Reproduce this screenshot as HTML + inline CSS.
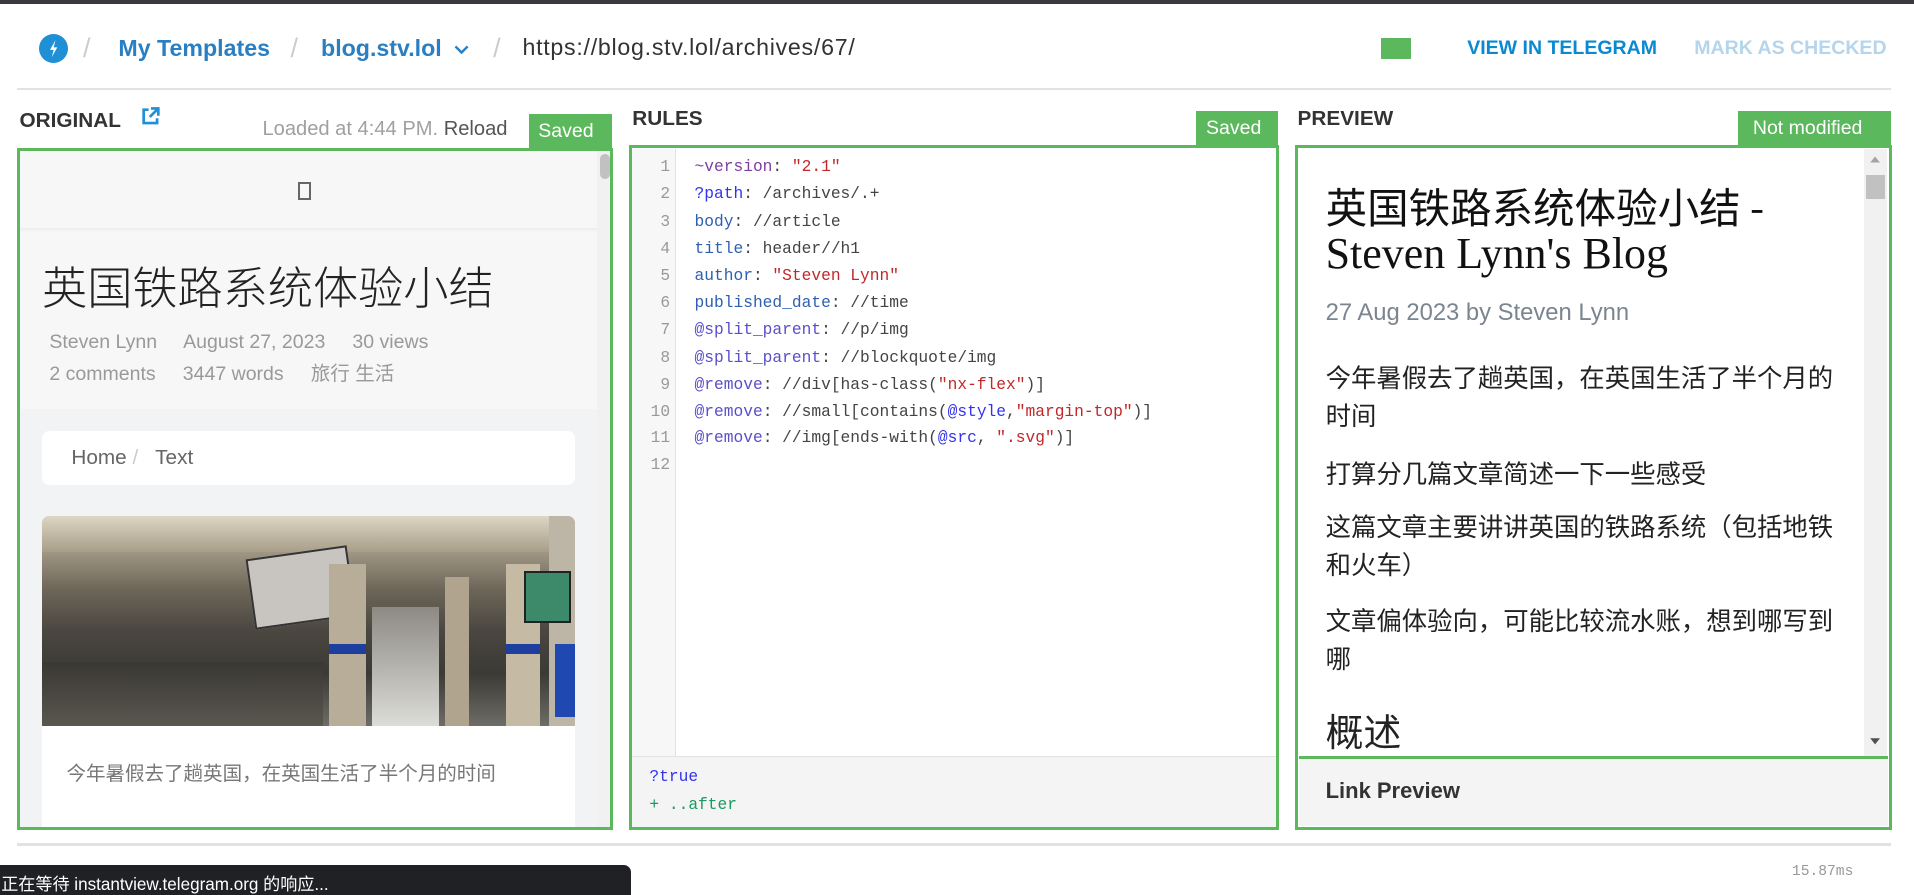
<!DOCTYPE html>
<html><head><meta charset="utf-8">
<style>
html,body{margin:0;padding:0;}
body{width:1568px;height:731px;overflow:hidden;background:#fff;position:relative;zoom:1.22066;font-family:"Liberation Sans","Noto Sans CJK SC",sans-serif;}
.abs{position:absolute;}
.panel{position:absolute;border:3px solid #5cb85c;box-sizing:border-box;overflow:hidden;background:#fff;}
.badge{position:absolute;background:#5cb85c;color:#fff;font-size:16px;height:28px;line-height:28px;padding:0 8px;box-sizing:border-box;}
.lbl{position:absolute;font-size:17px;font-weight:bold;color:#333;}
.code{position:absolute;left:569px;font-family:"Liberation Mono",monospace;font-size:13.3px;color:#444;white-space:pre;}
.ln{position:absolute;left:518px;width:31px;text-align:right;font-family:"Liberation Mono",monospace;font-size:13.3px;color:#999;}
.k{color:#2e5fb0}.p{color:#7b3fa0}.q{color:#3333ee}.a{color:#5a4fc8}.s{color:#c0282a}
.pv{position:absolute;left:1086px;font-size:20.8px;color:#222;white-space:nowrap;}
</style></head><body>
<div class="abs" style="left:0;top:0;width:1568px;height:3px;background:#3a3a3e"></div>

<div class="abs" style="left:32px;top:28px;width:24px;height:24px;border-radius:50%;background:#1f8fd6"></div>
<svg class="abs" style="left:32px;top:28px" width="24" height="24" viewBox="0 0 24 24"><path d="M13.5 5 L9 13 L12 13 L10.5 19 L15 11 L12 11 Z" fill="#fff"/></svg>
<div class="abs" style="left:68px;top:27px;font-size:22px;color:#ccc">/</div>
<div class="abs" style="left:97px;top:29px;font-size:19px;color:#2a7fc2;font-weight:bold">My Templates</div>
<div class="abs" style="left:238px;top:27px;font-size:22px;color:#ccc">/</div>
<div class="abs" style="left:263px;top:29px;font-size:19px;color:#2a7fc2;font-weight:bold">blog.stv.lol</div>
<svg class="abs" style="left:371px;top:36px" width="14" height="10" viewBox="0 0 14 10"><path d="M2 2 L7 7 L12 2" stroke="#2a7fc2" stroke-width="2" fill="none"/></svg>
<div class="abs" style="left:404px;top:27px;font-size:22px;color:#ccc">/</div>
<div class="abs" style="left:428px;top:28px;font-size:19px;color:#333;letter-spacing:0.6px">https://blog.stv.lol/archives/67/</div>
<div class="abs" style="left:1131px;top:31px;width:25px;height:17px;background:#5cb85c"></div>
<div class="abs" style="left:1202px;top:30px;font-size:16px;font-weight:bold;color:#0a88d0">VIEW IN TELEGRAM</div>
<div class="abs" style="left:1388px;top:30px;font-size:16px;font-weight:bold;color:#b4d5ec">MARK AS CHECKED</div>
<div class="abs" style="left:14px;top:72px;width:1535px;height:2px;background:#e2e2e2"></div>

<div class="lbl" style="left:16px;top:89px">ORIGINAL</div>
<svg class="abs" style="left:115px;top:87px" width="17" height="17" viewBox="0 0 17 17"><path d="M7 3 H3 V14 H14 V10" stroke="#1f8fd6" stroke-width="2.2" fill="none"/><path d="M9 2 H15 V8 M15 2 L8 9" stroke="#1f8fd6" stroke-width="2.2" fill="none"/></svg>
<div class="abs" style="left:215px;top:97px;font-size:16.5px;color:#a0a0a0">Loaded at 4:44 PM. <span style="color:#555">Reload</span></div>
<div class="badge" style="left:433px;top:93px;width:68px">Saved</div>
<div class="lbl" style="left:518px;top:88px">RULES</div>
<div class="badge" style="left:980px;top:91px;width:67px">Saved</div>
<div class="lbl" style="left:1063px;top:88px">PREVIEW</div>
<div class="badge" style="left:1424px;top:91px;width:125px;padding-left:12px">Not modified</div>

<div class="panel" style="left:14px;top:121px;width:488px;height:559px;background:#f2f3f5">
  <div class="abs" style="left:0;top:0;width:473px;height:63px;background:#f7f7f7"></div>
  <div class="abs" style="left:228px;top:26px;width:10px;height:14px;border:2px solid #666;box-sizing:border-box"></div>
  <div class="abs" style="left:0;top:63px;width:473px;height:4px;background:linear-gradient(#ececec,#f7f7f7)"></div>
  <div class="abs" style="left:0;top:67px;width:473px;height:145px;background:#f7f7f7"></div>
  <div class="abs" style="left:18px;top:87px;font-size:37px;color:#222;font-weight:300;font-family:'Noto Sans CJK SC',sans-serif;line-height:48px">英国铁路系统体验小结</div>
  <div class="abs" style="left:24px;top:148px;font-size:16px;color:#999;white-space:pre">Steven Lynn     August 27, 2023     30 views</div>
  <div class="abs" style="left:24px;top:169px;font-size:16px;color:#999;white-space:pre">2 comments     3447 words     旅行 生活</div>
  <div class="abs" style="left:18px;top:230px;width:437px;height:44px;background:#fff;border-radius:6px"></div>
  <div class="abs" style="left:42px;top:242px;font-size:17px;color:#666">Home <span style="color:#ccc">/</span>&nbsp;&nbsp; Text</div>
  <div class="abs" style="left:18px;top:299px;width:437px;height:172px;border-radius:6px 6px 0 0;overflow:hidden;background:linear-gradient(180deg,#cfc6b2 0%,#9d9482 18%,#6d6658 35%,#4a4640 55%,#3b3a36 75%,#6e6c66 100%)">
    <div class="abs" style="left:0;top:0;width:437px;height:30px;background:linear-gradient(180deg,#ddd6c4,#a89e88)"></div>
    <div class="abs" style="left:170px;top:30px;width:80px;height:55px;background:#c8c4c0;transform:rotate(-8deg);border:2px solid #333"></div>
    <div class="abs" style="left:235px;top:40px;width:30px;height:132px;background:#b8ad98"></div>
    <div class="abs" style="left:235px;top:105px;width:30px;height:8px;background:#1f3fa0"></div>
    <div class="abs" style="left:270px;top:75px;width:55px;height:97px;background:linear-gradient(180deg,#8d8a84,#dcdcd8)"></div>
    <div class="abs" style="left:330px;top:50px;width:20px;height:122px;background:#b0a48e"></div>
    <div class="abs" style="left:380px;top:40px;width:28px;height:132px;background:#c5baa4"></div>
    <div class="abs" style="left:380px;top:105px;width:28px;height:8px;background:#1f3fa0"></div>
    <div class="abs" style="left:415px;top:0;width:22px;height:172px;background:#bdb5a5"></div>
    <div class="abs" style="left:420px;top:105px;width:17px;height:60px;background:#1f48b0"></div>
    <div class="abs" style="left:395px;top:45px;width:35px;height:40px;background:#3c8a6a;border:2px solid #222"></div>
    <div class="abs" style="left:0;top:120px;width:230px;height:52px;background:linear-gradient(180deg,#3a3833,#5a5650)"></div>
  </div>
  <div class="abs" style="left:18px;top:471px;width:437px;height:90px;background:#fff"></div>
  <div class="abs" style="left:38px;top:497px;font-size:16px;color:#777">今年暑假去了趟英国，在英国生活了半个月的时间</div>
  <div class="abs" style="left:473px;top:0;width:12px;height:559px;background:#f1f1f1"></div>
  <div class="abs" style="left:475px;top:3px;width:8px;height:20px;background:#c1c1c1;border-radius:4px"></div>
</div>

<div class="panel" style="left:515px;top:119px;width:533px;height:561px"></div>
<div class="abs" style="left:518px;top:122px;width:35px;height:497px;background:#f7f7f7;border-right:1px solid #e2e2e2"></div>
<div class="ln" style="top:129px">1</div><div class="ln" style="top:151px">2</div><div class="ln" style="top:174px">3</div><div class="ln" style="top:196px">4</div><div class="ln" style="top:218px">5</div><div class="ln" style="top:240px">6</div><div class="ln" style="top:262px">7</div><div class="ln" style="top:285px">8</div><div class="ln" style="top:307px">9</div><div class="ln" style="top:329px">10</div><div class="ln" style="top:351px">11</div><div class="ln" style="top:373px">12</div>
<div class="code" style="top:129px"><span class="p">~version</span>: <span class="s">"2.1"</span></div>
<div class="code" style="top:151px"><span class="q">?path</span>: /archives/.+</div>
<div class="code" style="top:174px"><span class="k">body</span>: //article</div>
<div class="code" style="top:196px"><span class="k">title</span>: header//h1</div>
<div class="code" style="top:218px"><span class="k">author</span>: <span class="s">"Steven Lynn"</span></div>
<div class="code" style="top:240px"><span class="k">published_date</span>: //time</div>
<div class="code" style="top:262px"><span class="a">@split_parent</span>: //p/img</div>
<div class="code" style="top:285px"><span class="a">@split_parent</span>: //blockquote/img</div>
<div class="code" style="top:307px"><span class="a">@remove</span>: //div[has-class(<span class="s">"nx-flex"</span>)]</div>
<div class="code" style="top:329px"><span class="a">@remove</span>: //small[contains(<span class="q">@style</span>,<span class="s">"margin-top"</span>)]</div>
<div class="code" style="top:351px"><span class="a">@remove</span>: //img[ends-with(<span class="q">@src</span>, <span class="s">".svg"</span>)]</div>
<div class="abs" style="left:518px;top:619px;width:527px;height:58px;background:#f4f4f4;border-top:1px solid #e2e2e2"></div>
<div class="abs" style="left:532px;top:628px;font-family:'Liberation Mono',monospace;font-size:13.3px;color:#3333ee">?true</div>
<div class="abs" style="left:532px;top:651px;font-family:'Liberation Mono',monospace;font-size:13.3px;color:#1a9a60">+ ..after</div>

<div class="panel" style="left:1061px;top:119px;width:489px;height:561px"></div>
<div class="abs" style="left:1527px;top:122px;width:19px;height:497px;background:#f1f1f1"></div>
<svg class="abs" style="left:1531px;top:126px" width="10" height="8"><path d="M1 7 L5 2 L9 7 Z" fill="#a3a3a3"/></svg>
<div class="abs" style="left:1529px;top:143px;width:15px;height:20px;background:#c1c1c1"></div>
<svg class="abs" style="left:1531px;top:604px" width="10" height="8"><path d="M1 1 L5 6 L9 1 Z" fill="#505050"/></svg>
<div class="pv" style="top:150px;font-size:36px;line-height:37px;color:#111;font-family:'Liberation Serif','Noto Sans CJK SC',serif"><span style="font-family:'Noto Sans CJK SC',sans-serif;font-size:34px">英国铁路系统体验小结 -</span><br>Steven Lynn's Blog</div>
<div class="pv" style="top:245px;font-size:19.5px;color:#7b8590">27 Aug 2023 by Steven Lynn</div>
<div class="pv" style="top:296px;line-height:31px">今年暑假去了趟英国，在英国生活了半个月的<br>时间</div>
<div class="pv" style="top:373px">打算分几篇文章简述一下一些感受</div>
<div class="pv" style="top:418px;line-height:31px">这篇文章主要讲讲英国的铁路系统（包括地铁<br>和火车）</div>
<div class="pv" style="top:495px;line-height:31px">文章偏体验向，可能比较流水账，想到哪写到<br>哪</div>
<div class="pv" style="top:575px;font-size:31px">概述</div>
<div class="abs" style="left:1064px;top:619px;width:483px;height:3px;background:#5cb85c"></div>
<div class="abs" style="left:1064px;top:622px;width:483px;height:55px;background:#f4f4f4"></div>
<div class="abs" style="left:1086px;top:637px;font-size:18px;font-weight:bold;color:#333">Link Preview</div>

<div class="abs" style="left:14px;top:691px;width:1535px;height:2px;background:#e2e2e2"></div>
<div class="abs" style="left:0;top:709px;width:517px;height:24px;background:#202124;border-radius:0 6px 0 0"></div>
<div class="abs" style="left:1px;top:713px;font-size:14px;color:#fff;white-space:nowrap">正在等待 instantview.telegram.org 的响应...</div>
<div class="abs" style="left:1468px;top:708px;font-family:'Liberation Mono',monospace;font-size:12px;color:#999">15.87ms</div>
</body></html>
